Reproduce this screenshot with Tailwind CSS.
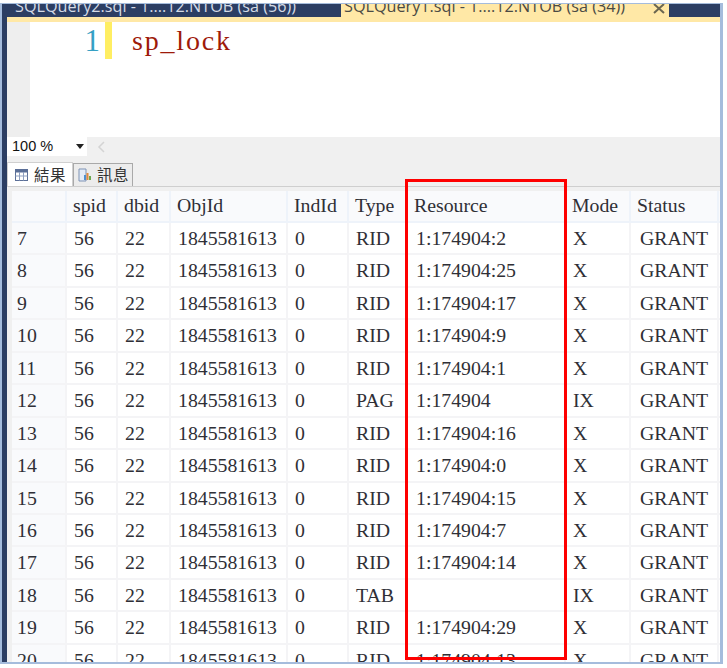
<!DOCTYPE html>
<html lang="en">
<head>
    <meta charset="UTF-8">
    <title>sp_lock</title>
    <script src="https://cdn.jsdelivr.net/npm/@tailwindcss/browser@4"></script>
</head>
<body class="bg-white">
    <div class="relative w-[727px] h-[668px] overflow-hidden bg-white">
        <!-- window frame -->
        <div class="mt-[3px] w-[723px] h-[661px] overflow-hidden border-l-[2px] border-r-[3px] border-b-[2px] border-[#a5bcdc] flex flex-col bg-[#2c3e63]">
            <!-- tab strip, text is cut off by the top edge -->
            <div class="h-[14px] flex shrink-0 overflow-hidden border-t border-[#a5bcdc] font-['Open_Sans',sans-serif] text-[16.2px] leading-[14px]">
                <div class="w-[339px] pl-[13px] text-[#d5dbe6] -mt-[5px] whitespace-nowrap">SQLQuery2.sql - 1....12.NTOB (sa (56))</div>
                <div class="w-[328px] bg-[#ffe8a6] pl-[3px] text-[#4a4a44] flex whitespace-nowrap">
                    <span class="-mt-[5px] w-[309px]">SQLQuery1.sql - 1....12.NTOB (sa (34))</span>
                    <svg width="13" height="10" viewBox="0 0 13 10"><path d="M1 0L11 9M11 0L1 9" stroke="#6b6650" stroke-width="2" fill="none"/></svg>
                </div>
            </div>
            <div class="h-[5px] shrink-0 ml-[5px] bg-[#ffe8a6]"></div>

            <div class="flex-1 flex flex-col ml-[5px] bg-[#f0f0f0] overflow-hidden">
                <!-- editor -->
                <div class="h-[115px] shrink-0 flex bg-white font-['Liberation_Serif',serif]">
                    <div class="w-[23px] bg-[#eeeeee]"></div>
                    <div class="w-[75px] pr-[5px] text-right text-[#35a0c4] text-[31px] leading-[38px]">1</div>
                    <div class="w-[7px] h-[37px] bg-[#ffee62]"></div>
                    <div class="pl-[20px] text-[#9e1a0a] text-[28px] tracking-[1.8px] leading-[38px]">sp_lock</div>
                </div>

                <!-- zoom bar -->
                <div class="h-[26px] shrink-0 flex items-start">
                    <div class="w-[80px] h-[19px] bg-white flex items-center justify-between pl-[5px] pr-[3px] font-['Liberation_Sans',sans-serif] text-[14.5px] text-[#111]">
                        100 %
                        <svg width="8" height="5" viewBox="0 0 8 5"><path d="M0 0H8L4 5Z" fill="#222"/></svg>
                    </div>
                    <svg class="ml-[10px] mt-[4px]" width="8" height="12" viewBox="0 0 8 12"><path d="M7 1L2 6L7 11" stroke="#d4d4d4" stroke-width="1.5" fill="none"/></svg>
                </div>

                <!-- result tabs -->
                <div class="h-[24px] shrink-0 flex items-end border-b border-[#cfcfcf] font-['Noto_Sans_CJK_TC',sans-serif] text-[15.5px] text-[#333]">
                    <div class="w-[66px] h-[24px] bg-white border border-b-0 border-[#d0d0d0] flex items-center pl-[7px] gap-[6px] tracking-[0.5px]">
                        <svg width="13" height="12" viewBox="0 0 13 12"><rect x="0.5" y="0.5" width="12" height="11" fill="#fff" stroke="#5b6f97"/><rect x="0.5" y="0.5" width="12" height="3" fill="#5b6f97"/><path d="M0.5 7H12.5M4.5 3V11.5M8.5 3V11.5" stroke="#8fa0c0"/></svg>
                        結果
                    </div>
                    <div class="w-[60px] h-[23px] bg-[#ececec] border border-b-0 border-[#a9a9a9] flex items-center pl-[4px] gap-[6px] tracking-[0.5px]">
                        <svg width="13" height="14" viewBox="0 0 13 14"><path d="M1 1H8V13H1Z" fill="#e4ecf7" stroke="#7f93b5"/><rect x="6" y="7" width="2" height="5" fill="#4f8fd0"/><rect x="8.5" y="5" width="2" height="7" fill="#e08a3c"/><rect x="11" y="8" width="2" height="4" fill="#6ba84f"/></svg>
                        訊息
                    </div>
                </div>

                <!-- results grid -->
                <div class="flex-1 ml-[5px] mt-[4px] bg-white overflow-hidden font-['Liberation_Serif',serif] text-[19.8px] text-[#2f2f36]" id="grid"></div>
            </div>
        </div>

        <!-- red highlight over the Resource column -->
        <div class="absolute left-[405px] top-[179px] w-[162px] h-[481px] border-[3px] border-[#fe0000]"></div>
    </div>

    <script>
        const cols = 'grid grid-cols-[55px_51px_53px_117px_61px_59px_158px_65px_88px]';
        const head = ['', 'spid', 'dbid', 'ObjId', 'IndId', 'Type', 'Resource', 'Mode', 'Status'];
        const rows = [
            [7, 'RID', '1:174904:2', 'X'], [8, 'RID', '1:174904:25', 'X'], [9, 'RID', '1:174904:17', 'X'],
            [10, 'RID', '1:174904:9', 'X'], [11, 'RID', '1:174904:1', 'X'], [12, 'PAG', '1:174904', 'IX'],
            [13, 'RID', '1:174904:16', 'X'], [14, 'RID', '1:174904:0', 'X'], [15, 'RID', '1:174904:15', 'X'],
            [16, 'RID', '1:174904:7', 'X'], [17, 'RID', '1:174904:14', 'X'], [18, 'TAB', '', 'IX'],
            [19, 'RID', '1:174904:29', 'X'], [20, 'RID', '1:174904:13', 'X']
        ];
        // left padding of the value cells, a few columns sit further in
        const pad = ['pl-[5px] bg-[#f9fafc]', 'pl-[7px]', 'pl-[7px]', 'pl-[7px]', 'pl-[7px]', 'pl-[7px]', 'pl-[8px]', 'pl-[7px]', 'pl-[9px]'];
        let html = `<div class="${cols} h-[32px] bg-[#f9fafc] border-b-[2px] border-[#eef3fa]">` +
            head.map(h => `<div class="pl-[6px] leading-[28px] border-r-[2px] border-[#eef3fa]">${h}</div>`).join('') + '</div>';
        rows.forEach(r => {
            const cells = [r[0], 56, 22, 1845581613, 0, r[1], r[2], r[3], 'GRANT'];
            html += `<div class="${cols} h-[32.45px] border-b-[2px] border-[#f4f4f6]">` + cells.map((c, i) =>
                `<div class="${pad[i]} leading-[30px] border-r-[2px] border-[#f4f4f6]">${c}</div>`).join('') + '</div>';
        });
        document.getElementById('grid').innerHTML = html;
    </script>
</body>
</html>
